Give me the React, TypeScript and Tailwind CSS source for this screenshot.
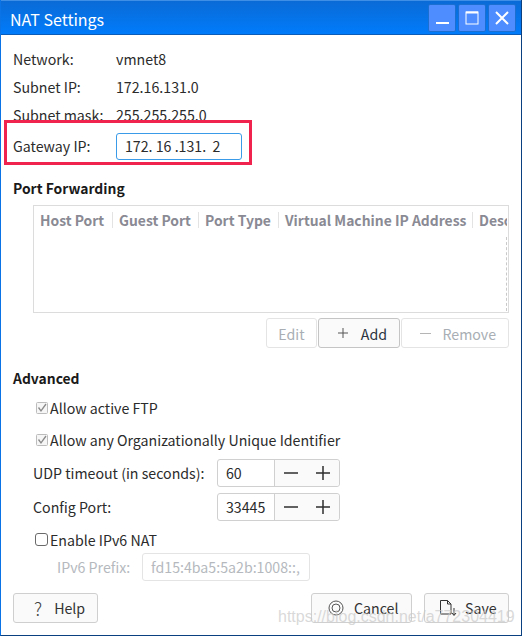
import type { ReactNode } from 'react';

const FONT = "font-['Noto_Sans_CJK_SC','Noto_Sans',sans-serif]";

function WinButton({ children }: { children: ReactNode }) {
  return (
    <div className="flex h-[28px] w-[28px] items-center justify-center rounded-[2px] border border-[#1a6fd0] bg-[#4d8dff]">
      {children}
    </div>
  );
}

function InfoRow({ label, value }: { label: string; value: string }) {
  return (
    <div className="flex h-[28px] items-center">
      <span className="w-[103px] whitespace-nowrap">{label}</span>
      <span>{value}</span>
    </div>
  );
}

function HeaderCell({ label, width }: { label: string; width: string }) {
  return (
    <div className={`flex h-[16px] items-center whitespace-nowrap border-r border-[#e3e3e3] pl-[6px] ${width}`}>
      {label}
    </div>
  );
}

function CheckBox({ checked }: { checked: boolean }) {
  return (
    <svg width="14" height="14" viewBox="0 0 14 14" className="mr-[1px] shrink-0">
      {checked ? (
        <>
          <rect x="1.5" y="1.5" width="11" height="11" rx="1" fill="#f6f6f6" stroke="#bcbcbc" />
          <path d="M3.5 6.5 L6 10 L11 3" fill="none" stroke="#8a8a8a" strokeWidth="1.3" />
        </>
      ) : (
        <rect x="0.5" y="0.5" width="12" height="12" rx="2.5" fill="#fff" stroke="#6a6a6a" />
      )}
    </svg>
  );
}

function Spinner({ value }: { value: string }) {
  return (
    <div className="flex h-[28px] w-[123px] items-center rounded-[3px] border border-[#d0d0d0]">
      <span className="flex h-full w-[57px] items-center border-r border-[#d0d0d0] pl-[8px]">{value}</span>
      <div className="flex h-full flex-1 items-center justify-center gap-[16px] rounded-r-[3px] bg-[#fafafa]">
        <svg width="16" height="16" viewBox="0 0 16 16">
          <path d="M1 8 H15" stroke="#2e2e2e" strokeWidth="1.5" />
        </svg>
        <svg width="16" height="16" viewBox="0 0 16 16">
          <path d="M1 8 H15 M8 1 V15" stroke="#2e2e2e" strokeWidth="1.5" />
        </svg>
      </div>
    </div>
  );
}

function FooterButton({
  icon,
  label,
  width,
  gap,
  pad,
}: {
  icon: ReactNode;
  label: string;
  width: string;
  gap: string;
  pad: string;
}) {
  return (
    <div
      className={`flex h-[30px] items-center rounded-[3px] border border-[#cfcfcf] bg-[#fafafa] text-[#333] ${width} ${gap} ${pad}`}
    >
      {icon}
      <span>{label}</span>
    </div>
  );
}

export default function App() {
  return (
    <div
      className={`relative flex h-[636px] w-[522px] flex-col overflow-hidden border-b-[1px] border-l-[1px] border-r-[1px] border-b-[#0a3f80] border-l-[#0a73e6] border-r-[#0a3f80] bg-white text-[14.2px] leading-[20px] text-[#2b2b2b] ${FONT}`}
    >
      {/* title bar */}
      <div className="flex h-[35px] shrink-0 items-center justify-between border-b border-t border-b-[#0a5cb8] border-t-[#3f8fe6] bg-gradient-to-b from-[#0a6bd6] to-[#007bfb] pl-[9px] pr-[5px] text-[16px] text-white">
        <span className="mt-[3px]">NAT Settings</span>
        <div className="flex gap-[2px]">
          <WinButton>
            <svg width="16" height="16" viewBox="0 0 16 16">
              <path d="M2 13 H15" stroke="#fff" strokeWidth="2" />
            </svg>
          </WinButton>
          <WinButton>
            <svg width="16" height="16" viewBox="0 0 16 16">
              <rect x="2" y="2" width="12" height="12" fill="none" stroke="#fff" strokeWidth="1" />
              <path d="M2 2.5 H14" stroke="#fff" strokeWidth="2" />
            </svg>
          </WinButton>
          <WinButton>
            <svg width="16" height="16" viewBox="0 0 16 16">
              <path d="M2 2 L14 14 M14 2 L2 14" stroke="#fff" strokeWidth="2" />
            </svg>
          </WinButton>
        </div>
      </div>

      <div className="flex flex-1 flex-col pl-[12px] pr-[12px]">
        <div className="mt-[10px]">
          <InfoRow label="Network:" value="vmnet8" />
          <InfoRow label="Subnet IP:" value="172.16.131.0" />
          <InfoRow label="Subnet mask:" value="255.255.255.0" />
        </div>
        <div className="mt-[3px] flex h-[28px] items-center">
          <span className="w-[103px]">Gateway IP:</span>
          <div className="flex h-[27px] w-[126px] items-center whitespace-pre rounded-[3px] border border-[#3a9be8] pl-[8px]">
            172. 16 .131.  2
          </div>
        </div>

        <div className="mt-[18px] text-[13.9px] font-bold leading-[20px] text-[#1a1a1a]">Port Forwarding</div>

        {/* table */}
        <div className="ml-[20px] mt-[7px] flex h-[108px] w-[476px] flex-col overflow-hidden border border-[#dcdcdc]">
          <div className="mt-[6px] flex h-[16px] items-center text-[13.9px] font-bold text-[#8a8a94]">
            <HeaderCell label="Host Port" width="w-[79px] shrink-0" />
            <HeaderCell label="Guest Port" width="w-[86px] shrink-0" />
            <HeaderCell label="Port Type" width="w-[80px] shrink-0" />
            <HeaderCell label="Virtual Machine IP Address" width="w-[194px] shrink-0" />
            <div className="w-[34px] overflow-hidden pl-[6px]">Description</div>
          </div>
          <div className="flex flex-1 justify-end pr-[1px] pt-[9px]">
            <div className="h-[74px] border-r border-dashed border-[#c9c9c9]" />
          </div>
          <div className="mb-[3px] ml-[3px] h-[4px] w-[463px] rounded-full bg-[#cfcfd3]" />
        </div>

        <div className="ml-[253px] mt-[5px] flex h-[30px] text-[#a8aeb4]">
          <div className="flex w-[51px] items-center justify-center rounded-[3px] border border-[#e4e4e4] pt-[2px]">
            Edit
          </div>
          <div className="mx-[1px] flex w-[83px] items-center gap-[13px] rounded-[3px] border border-[#c5c5c5] bg-[#fafafa] pl-[19px] text-[#2b3440]">
            <svg width="10" height="10" viewBox="0 0 10 10">
              <path d="M0 5 H10 M5 0 V10" stroke="#555" strokeWidth="1" />
            </svg>
            <span className="pt-[2px]">Add</span>
          </div>
          <div className="flex w-[108px] items-center gap-[11px] rounded-[3px] border border-[#e4e4e4] pl-[18px]">
            <svg width="11" height="11" viewBox="0 0 11 11">
              <path d="M0 5.5 H11" stroke="#b5b5b5" strokeWidth="1" />
            </svg>
            <span className="pt-[2px]">Remove</span>
          </div>
        </div>

        <div className="mt-[20px] text-[13.9px] font-bold leading-[20px] text-[#1a1a1a]">Advanced</div>

        <div className="ml-[22px] mt-[10px] flex h-[20px] items-center">
          <CheckBox checked />
          <span>Allow active FTP</span>
        </div>
        <div className="ml-[22px] mt-[12px] flex h-[20px] items-center whitespace-nowrap">
          <CheckBox checked />
          <span>Allow any Organizationally Unique Identifier</span>
        </div>
        <div className="ml-[20px] mt-[9px] flex h-[28px] items-center">
          <span className="w-[184px]">UDP timeout (in seconds):</span>
          <Spinner value="60" />
        </div>
        <div className="ml-[20px] mt-[6px] flex h-[28px] items-center">
          <span className="w-[184px]">Config Port:</span>
          <Spinner value="33445" />
        </div>
        <div className="ml-[22px] mt-[9px] flex h-[20px] items-center">
          <CheckBox checked={false} />
          <span>Enable IPv6 NAT</span>
        </div>
        <div className="ml-[44px] mt-[3px] flex h-[28px] items-center text-[#b5b9be]">
          <span className="w-[85px]">IPv6 Prefix:</span>
          <div className="flex h-[28px] w-[168px] items-center overflow-hidden whitespace-nowrap rounded-[3px] border border-[#e4e4e4] pl-[8px]">
            fd15:4ba5:5a2b:1008::,
          </div>
        </div>

        <div className="mt-[12px] flex items-center justify-between">
          <FooterButton
            width="w-[85px]"
            gap="gap-[12px]"
            pad="pl-[20px]"
            label="Help"
            icon={<span className="text-[18px] font-light leading-none text-[#444]">?</span>}
          />
          <div className="flex gap-[12px]">
            <FooterButton
              width="w-[101px]"
              gap="gap-[10px]"
              pad="pl-[16px]"
              label="Cancel"
              icon={
                <svg width="16" height="16" viewBox="0 0 16 16" fill="none" stroke="#555">
                  <circle cx="8" cy="8" r="7" />
                  <circle cx="8" cy="8" r="4" />
                </svg>
              }
            />
            <FooterButton
              width="w-[85px]"
              gap="gap-[8px]"
              pad="pl-[14px]"
              label="Save"
              icon={
                <svg width="18" height="18" viewBox="0 0 18 18" fill="none" stroke="#333">
                  <path d="M1.5 1.5 H8.5 L12 5 V15 H1.5 Z M8.5 1.5 V5 H12" />
                  <path d="M15 9 V16 M13 14 L15 16.5 L17 14" />
                </svg>
              }
            />
          </div>
        </div>
      </div>

      {/* annotation + watermark sit on top of the dialog */}
      <div className="pointer-events-none absolute left-[3px] top-[120px] h-[45px] w-[248px] border-[3px] border-[#f0234f]" />
      <div className="pointer-events-none absolute left-[277px] top-[607px] whitespace-nowrap font-['Liberation_Sans',sans-serif] text-[16px] leading-[20px] text-[#c9c9c9]/70">
        https://blog.csdn.net/a772304419
      </div>
    </div>
  );
}
